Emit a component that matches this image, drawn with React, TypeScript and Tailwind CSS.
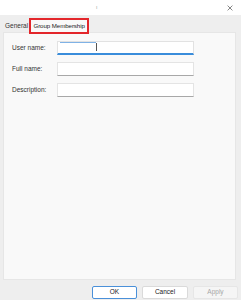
const fields = [
  { label: 'User name:', focused: true },
  { label: 'Full name:', focused: false },
  { label: 'Description:', focused: false },
];

const App = () => {
  return (
    <div className="w-[241px] h-[300px] flex flex-col bg-[#eeeeee] font-['Liberation_Sans',Arial,sans-serif] text-[6.5px] text-[#1a1a1a] overflow-hidden">
      <div className="h-[15px] bg-white flex items-center shrink-0">
        <span className="ml-[96px] text-[5px] text-[#9a9a9a] leading-none">ı</span>
        <svg className="w-[6px] h-[6px] ml-auto mr-[8px]" viewBox="0 0 10 10" fill="none" stroke="#555" strokeWidth={1.2}>
          <path d="M1 1l8 8M9 1l-8 8" />
        </svg>
      </div>

      <div className="flex items-end h-[17px] pl-[5px] shrink-0 relative z-10">
        <div className="h-[13px] flex items-center pr-[1px] text-[#333] whitespace-nowrap">General</div>
        <div className="h-[16px] w-[60px] -mb-[2px] border-2 border-[#e3262b] bg-[#f9f9f9] flex items-center justify-center text-[#222] whitespace-nowrap text-[6.2px] tracking-[-0.1px]">
          Group Membership
        </div>
      </div>

      <div className="ml-[3px] w-[233px] h-[248px] bg-[#f9f9f9] border border-[#e6e6e6] pt-[8px] flex flex-col gap-[8px] shrink-0">
        {fields.map((f) => (
          <div key={f.label} className="flex items-center h-[13px]">
            <span className="w-[53px] pl-[8px] text-[#333] whitespace-nowrap">{f.label}</span>
            <div
              className={
                f.focused
                  ? 'relative w-[137px] h-[14px] bg-white border border-[#e2e2e2] border-b-2 border-b-[#3a8ddb]'
                  : 'relative w-[137px] h-[14px] bg-white border border-[#e4e4e4] border-b-[#a8a8a8]'
              }
            >
              {f.focused && (
                <>
                  <div className="absolute left-[2px] top-0 w-[36px] h-px bg-[#7fb2e6]" />
                  <div className="absolute left-[38px] top-[1px] w-px h-[8px] bg-[#555]" />
                </>
              )}
            </div>
          </div>
        ))}
      </div>

      <div className="flex justify-end gap-[5px] pr-[3px] mt-[6px]">
        <button className="w-[45px] h-[13px] bg-white border border-[#4a90d9] rounded-[2px] text-[#222] leading-none">OK</button>
        <button className="w-[46px] h-[13px] bg-white border border-[#dadada] rounded-[2px] text-[#222] leading-none">Cancel</button>
        <button className="w-[45px] h-[13px] bg-[#f5f5f5] border border-[#e6e6e6] rounded-[2px] text-[#a6a6a6] leading-none">Apply</button>
      </div>
    </div>
  );
};

export default App;
